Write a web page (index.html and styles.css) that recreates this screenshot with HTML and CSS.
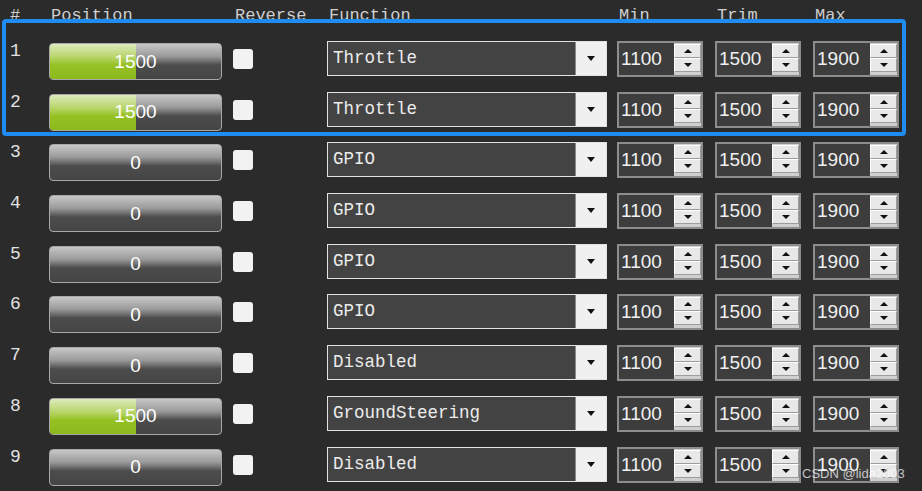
FILE: index.html
```html
<!DOCTYPE html>
<html lang="en">
<head>
    <meta charset="UTF-8">
    <meta name="viewport" content="width=device-width, initial-scale=1.0">
    <title>Servo Output</title>
    <link rel="stylesheet" href="styles.css">
</head>
<body>
    <div class="line head">
        <div class="h-num">#</div>
        <div>Position</div>
        <div>Reverse</div>
        <div>Function</div>
        <div>Min</div>
        <div>Trim</div>
        <div>Max</div>
    </div>

    <div class="rows">
        <div class="line row">
            <div class="num">1</div>
            <div class="bar"><div class="fill" style="width: 50%"></div><span class="bar-text">1500</span></div>
            <div class="chk"></div>
            <div class="combo"><div class="combo-val">Throttle</div><div class="combo-btn"></div></div>
            <div class="spin"><div class="spin-val">1100</div><div class="spin-btns"><div class="up"></div><div class="down"></div></div></div>
            <div class="spin"><div class="spin-val">1500</div><div class="spin-btns"><div class="up"></div><div class="down"></div></div></div>
            <div class="spin"><div class="spin-val">1900</div><div class="spin-btns"><div class="up"></div><div class="down"></div></div></div>
        </div>
        <div class="line row">
            <div class="num">2</div>
            <div class="bar"><div class="fill" style="width: 50%"></div><span class="bar-text">1500</span></div>
            <div class="chk"></div>
            <div class="combo"><div class="combo-val">Throttle</div><div class="combo-btn"></div></div>
            <div class="spin"><div class="spin-val">1100</div><div class="spin-btns"><div class="up"></div><div class="down"></div></div></div>
            <div class="spin"><div class="spin-val">1500</div><div class="spin-btns"><div class="up"></div><div class="down"></div></div></div>
            <div class="spin"><div class="spin-val">1900</div><div class="spin-btns"><div class="up"></div><div class="down"></div></div></div>
        </div>
        <div class="line row">
            <div class="num">3</div>
            <div class="bar"><span class="bar-text">0</span></div>
            <div class="chk"></div>
            <div class="combo"><div class="combo-val">GPIO</div><div class="combo-btn"></div></div>
            <div class="spin"><div class="spin-val">1100</div><div class="spin-btns"><div class="up"></div><div class="down"></div></div></div>
            <div class="spin"><div class="spin-val">1500</div><div class="spin-btns"><div class="up"></div><div class="down"></div></div></div>
            <div class="spin"><div class="spin-val">1900</div><div class="spin-btns"><div class="up"></div><div class="down"></div></div></div>
        </div>
        <div class="line row">
            <div class="num">4</div>
            <div class="bar"><span class="bar-text">0</span></div>
            <div class="chk"></div>
            <div class="combo"><div class="combo-val">GPIO</div><div class="combo-btn"></div></div>
            <div class="spin"><div class="spin-val">1100</div><div class="spin-btns"><div class="up"></div><div class="down"></div></div></div>
            <div class="spin"><div class="spin-val">1500</div><div class="spin-btns"><div class="up"></div><div class="down"></div></div></div>
            <div class="spin"><div class="spin-val">1900</div><div class="spin-btns"><div class="up"></div><div class="down"></div></div></div>
        </div>
        <div class="line row">
            <div class="num">5</div>
            <div class="bar"><span class="bar-text">0</span></div>
            <div class="chk"></div>
            <div class="combo"><div class="combo-val">GPIO</div><div class="combo-btn"></div></div>
            <div class="spin"><div class="spin-val">1100</div><div class="spin-btns"><div class="up"></div><div class="down"></div></div></div>
            <div class="spin"><div class="spin-val">1500</div><div class="spin-btns"><div class="up"></div><div class="down"></div></div></div>
            <div class="spin"><div class="spin-val">1900</div><div class="spin-btns"><div class="up"></div><div class="down"></div></div></div>
        </div>
        <div class="line row">
            <div class="num">6</div>
            <div class="bar"><span class="bar-text">0</span></div>
            <div class="chk"></div>
            <div class="combo"><div class="combo-val">GPIO</div><div class="combo-btn"></div></div>
            <div class="spin"><div class="spin-val">1100</div><div class="spin-btns"><div class="up"></div><div class="down"></div></div></div>
            <div class="spin"><div class="spin-val">1500</div><div class="spin-btns"><div class="up"></div><div class="down"></div></div></div>
            <div class="spin"><div class="spin-val">1900</div><div class="spin-btns"><div class="up"></div><div class="down"></div></div></div>
        </div>
        <div class="line row">
            <div class="num">7</div>
            <div class="bar"><span class="bar-text">0</span></div>
            <div class="chk"></div>
            <div class="combo"><div class="combo-val">Disabled</div><div class="combo-btn"></div></div>
            <div class="spin"><div class="spin-val">1100</div><div class="spin-btns"><div class="up"></div><div class="down"></div></div></div>
            <div class="spin"><div class="spin-val">1500</div><div class="spin-btns"><div class="up"></div><div class="down"></div></div></div>
            <div class="spin"><div class="spin-val">1900</div><div class="spin-btns"><div class="up"></div><div class="down"></div></div></div>
        </div>
        <div class="line row">
            <div class="num">8</div>
            <div class="bar"><div class="fill" style="width: 50%"></div><span class="bar-text">1500</span></div>
            <div class="chk"></div>
            <div class="combo"><div class="combo-val">GroundSteering</div><div class="combo-btn"></div></div>
            <div class="spin"><div class="spin-val">1100</div><div class="spin-btns"><div class="up"></div><div class="down"></div></div></div>
            <div class="spin"><div class="spin-val">1500</div><div class="spin-btns"><div class="up"></div><div class="down"></div></div></div>
            <div class="spin"><div class="spin-val">1900</div><div class="spin-btns"><div class="up"></div><div class="down"></div></div></div>
        </div>
        <div class="line row">
            <div class="num">9</div>
            <div class="bar"><span class="bar-text">0</span></div>
            <div class="chk"></div>
            <div class="combo"><div class="combo-val">Disabled</div><div class="combo-btn"></div></div>
            <div class="spin"><div class="spin-val">1100</div><div class="spin-btns"><div class="up"></div><div class="down"></div></div></div>
            <div class="spin"><div class="spin-val">1500</div><div class="spin-btns"><div class="up"></div><div class="down"></div></div></div>
            <div class="spin"><div class="spin-val">1900</div><div class="spin-btns"><div class="up"></div><div class="down"></div></div></div>
        </div>
    </div>

    <!-- highlight around the two throttle rows -->
    <div class="highlight"></div>
    <div class="watermark">CSDN @lida2003</div>
</body>
</html>
```

FILE: styles.css
```css
body {
    margin: 0;
    width: 922px;
    height: 491px;
    overflow: hidden;
    position: relative;
    background-color: #2b2b2b;
    font-family: 'Liberation Mono', 'DejaVu Sans Mono', monospace;
    color: #d6d6d6;
}

.line {
    display: grid;
    grid-template-columns: 49px 184px 94px 290px 98px 98px 87px;
    align-items: start;
}

.head {
    height: 19px;
    overflow: hidden;
    box-sizing: border-box;
    padding-top: 6px;
    font-size: 17px;
    line-height: 20px;
    color: #cfcfcf;
}

.head div {
    padding-left: 2px;
}

.head .h-num {
    padding-left: 10px;
}

.rows {
    padding-top: 22px;
}

.row {
    height: 50.7px;
}

.num {
    padding-left: 10px;
    margin-top: 0;
    font-size: 18px;
    line-height: 20px;
    color: #e2e2e2;
}

/* progress bar */
.bar {
    margin-top: 2px;
    width: 173px;
    height: 37px;
    box-sizing: border-box;
    border: 1px solid #a8a8a8;
    border-radius: 4px;
    overflow: hidden;
    display: grid;
    background: linear-gradient(#c7c7c7, #9a9a9a 35%, #4c4c4c 60%, #454545);
}

.fill {
    grid-area: 1 / 1;
    justify-self: start;
    height: 100%;
    background: linear-gradient(#dcebbd, #b7d468 38%, #95c123 60%, #8cb91c);
}

.bar-text {
    grid-area: 1 / 1;
    place-self: center;
    font-family: 'Liberation Sans', Arial, sans-serif;
    font-size: 19px;
    color: #fff;
}

.chk {
    margin-top: 8px;
    width: 20px;
    height: 20px;
    border-radius: 3px;
    background-color: #f2f2f2;
}

/* combo box */
.combo {
    width: 280px;
    height: 35px;
    box-sizing: border-box;
    border: 1px solid #e2e2e2;
    display: flex;
    background-color: #f0f0f0;
}

.combo-val {
    flex: 1;
    background-color: #434343;
    border-right: 1px solid #8a8a8a;
    padding-left: 5px;
    font-size: 17.5px;
    line-height: 33px;
    color: #ececec;
}

.combo-btn {
    width: 30px;
    display: flex;
    justify-content: center;
    align-items: center;
}

.combo-btn::after {
    content: '';
    border-left: 4.5px solid transparent;
    border-right: 4.5px solid transparent;
    border-top: 5px solid #111;
}

/* spin box */
.spin {
    width: 86px;
    height: 36px;
    box-sizing: border-box;
    border: 2px solid #8d8d8d;
    background-color: #3d3d3d;
    display: flex;
}

.spin-val {
    flex: 1;
    padding-left: 2px;
    font-family: 'Liberation Sans', Arial, sans-serif;
    font-size: 19px;
    line-height: 31px;
    color: #f0f0f0;
}

.spin-btns {
    width: 27px;
    display: flex;
    flex-direction: column;
    padding: 1px 0 3px;
    box-sizing: border-box;
    background-color: #cfcfcf;
}

.spin-btns div {
    flex: 1;
    display: flex;
    justify-content: center;
    align-items: center;
    border: 1px solid;
    border-color: #fff #9c9c9c #9c9c9c #fff;
    background-color: #e8e8e8;
}

.spin-btns .up::after {
    content: '';
    border-left: 4px solid transparent;
    border-right: 4px solid transparent;
    border-bottom: 4px solid #111;
}

.spin-btns .down::after {
    content: '';
    border-left: 4px solid transparent;
    border-right: 4px solid transparent;
    border-top: 4px solid #111;
}

.highlight {
    position: absolute;
    left: 2px;
    top: 19px;
    width: 904px;
    height: 117px;
    box-sizing: border-box;
    border: 4px solid #1e8cf0;
    border-radius: 4px;
}

.watermark {
    position: absolute;
    left: 802px;
    top: 466px;
    font-family: 'Liberation Sans', Arial, sans-serif;
    font-size: 13px;
    color: rgba(255, 255, 255, 0.72);
}
```
